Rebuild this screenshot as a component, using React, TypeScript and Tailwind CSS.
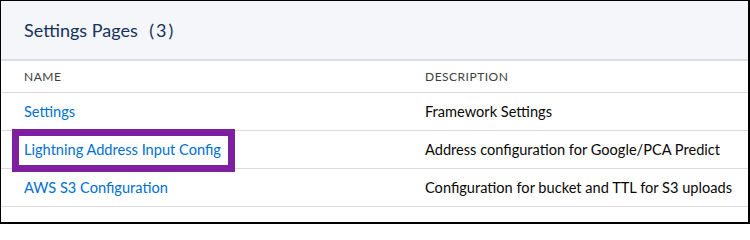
const rows = [
  { name: 'Settings', description: 'Framework Settings', marked: false },
  { name: 'Lightning Address Input Config', description: 'Address configuration for Google/PCA Predict', marked: true },
  { name: 'AWS S3 Configuration', description: 'Configuration for bucket and TTL for S3 uploads', marked: false },
];

export default function App() {
  return (
    <div
      className="w-[750px] h-[224px] bg-white border-black border-t border-l border-r-2 border-b-2 overflow-hidden"
      style={{ fontFamily: 'Lato, "Open Sans", sans-serif' }}
    >
      <div className="h-[60px] bg-[#f4f6f9] border-b-2 border-[#d8dde6] flex items-center pl-[23px]">
        <h2 className="text-[18px] text-[#16325c] leading-none">
          Settings Pages <span className="ml-[7px] tracking-[2px]">(3)</span>
        </h2>
      </div>

      <div className="h-[32px] flex items-center border-b border-[#dddbda] text-[12px] tracking-[0.5px] text-[#3e3e3c]">
        <div className="w-[424px] pl-[23px]">NAME</div>
        <div>DESCRIPTION</div>
      </div>

      {rows.map(row => (
        <div key={row.name} className="relative h-[38px] flex items-center border-b border-[#dddbda] text-[14.6px]">
          <div className="w-[424px] pl-[23px] text-[#0070d2]">{row.name}</div>
          <div className="text-[#080707]">{row.description}</div>
          {row.marked && (
            <div className="absolute left-[11px] top-[-2px] w-[223px] h-[43px] border-[7px] border-[#7e1ea0] pointer-events-none" />
          )}
        </div>
      ))}
    </div>
  );
}
